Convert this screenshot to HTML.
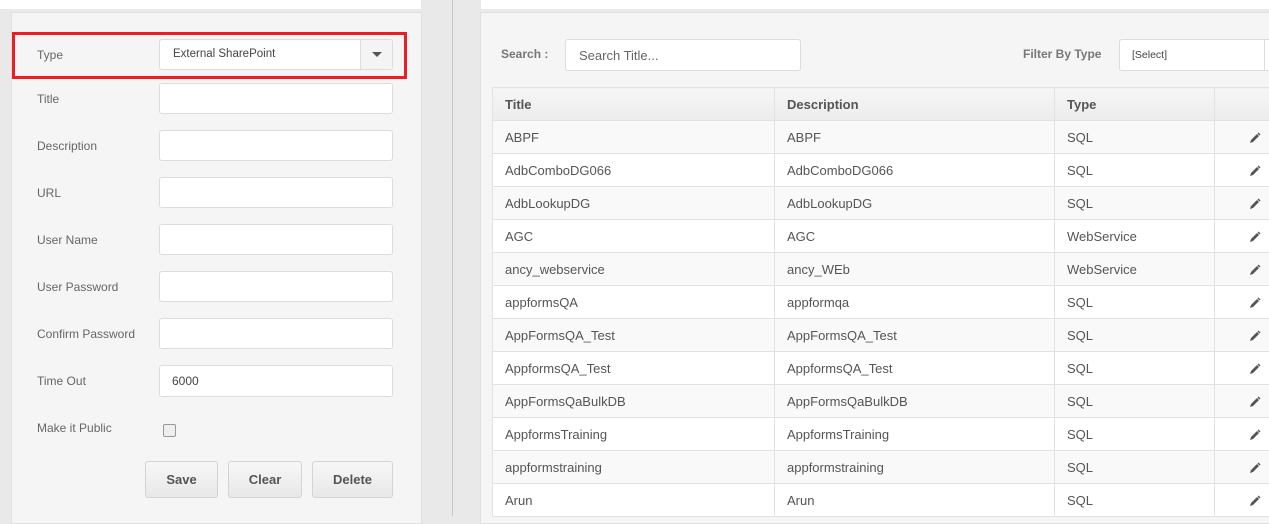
<!DOCTYPE html>
<html><head><style>
body{margin:0;width:1269px;height:516px;overflow:hidden;background:#e9e9e9;font-family:"Liberation Sans",sans-serif;position:relative}
.panel{position:absolute;background:#f5f5f5;border:1px solid #e0e0e0}
.lbl{position:absolute;left:37px;font-size:12px;color:#666}
.inp{position:absolute;left:159px;width:234px;height:31px;background:#fff;border:1px solid #dcdcdc;border-radius:3px;box-sizing:border-box;font-size:12px;color:#444;padding:8px 12px}
.btn{position:absolute;top:461px;height:37px;background:linear-gradient(#f7f7f7,#e8e8e8);border:1px solid #d4d4d4;border-radius:3px;box-sizing:border-box;font-size:13px;font-weight:bold;color:#555;text-align:center;line-height:35px}
table{position:absolute;left:492px;top:87px;border-collapse:collapse;font-size:13px;color:#555;table-layout:fixed;width:800px}
td,th{border:1px solid #e2e2e2;height:32px;padding:0 12px;text-align:left}
th{background:linear-gradient(#f6f6f6,#ececec);font-weight:bold;color:#555}
tr td{background:#fff}
tr:nth-child(even) td{background:#f9f9f9}
td.p{padding-left:34px}
svg{vertical-align:middle}
</style></head><body>
<div style="position:absolute;left:0;top:0;width:421px;height:9px;background:#fff"></div>
<div style="position:absolute;left:481px;top:0;width:788px;height:9px;background:#fff"></div>
<div style="position:absolute;left:452px;top:0;width:1px;height:516px;background:#c8c8c8"></div>
<div class="panel" style="left:11px;top:12px;width:409px;height:510px"></div>
<div class="panel" style="left:480px;top:12px;width:800px;height:510px"></div>
<div style="position:absolute;left:12px;top:32px;width:395px;height:47px;border:3px solid #ee1c25;box-sizing:border-box"></div>
<div class="lbl" style="top:48px">Type</div>
<div class="inp" style="top:39px;height:31px;padding:8px 13px;font-size:11.5px;color:#444">External SharePoint<div style="position:absolute;right:0;top:0;width:31px;height:29px;border-left:1px solid #ddd;background:#f4f4f4"><div style="position:absolute;left:11px;top:12px;border-left:5px solid transparent;border-right:5px solid transparent;border-top:5px solid #555"></div></div></div>
<div class="lbl" style="top:92px">Title</div><div class="inp" style="top:83px"></div>
<div class="lbl" style="top:139px">Description</div><div class="inp" style="top:130px"></div>
<div class="lbl" style="top:186px">URL</div><div class="inp" style="top:177px"></div>
<div class="lbl" style="top:233px">User Name</div><div class="inp" style="top:224px"></div>
<div class="lbl" style="top:280px">User Password</div><div class="inp" style="top:271px"></div>
<div class="lbl" style="top:327px">Confirm Password</div><div class="inp" style="top:318px"></div>
<div class="lbl" style="top:374px">Time Out</div><div class="inp" style="top:365px;height:32px">6000</div>
<div class="lbl" style="top:421px">Make it Public</div>
<div style="position:absolute;left:163px;top:424px;width:11px;height:11px;border:1px solid #999;border-radius:2px;background:#eee"></div>
<div class="btn" style="left:145px;width:73px">Save</div>
<div class="btn" style="left:228px;width:74px">Clear</div>
<div class="btn" style="left:312px;width:81px">Delete</div>
<div style="position:absolute;left:501px;top:47px;font-size:12px;font-weight:bold;color:#777">Search :</div>
<div class="inp" style="left:565px;top:39px;width:236px;height:32px;font-size:13px;color:#666;padding:8px 13px">Search Title...</div>
<div style="position:absolute;left:1023px;top:47px;font-size:12px;font-weight:bold;color:#777">Filter By Type</div>
<div class="inp" style="left:1119px;top:39px;width:160px;height:32px;font-size:10.5px;color:#444;padding:9px 12px">[Select]<div style="position:absolute;left:144px;top:0;width:1px;height:30px;background:#ddd"></div></div>
<table>
<colgroup><col style="width:282px"><col style="width:280px"><col style="width:160px"><col style="width:78px"></colgroup>
<tr><th>Title</th><th>Description</th><th>Type</th><th></th></tr>
<tr><td>ABPF</td><td>ABPF</td><td>SQL</td><td class="p"><svg width="12" height="12" viewBox="0 0 12 12"><path d="M1 11l1-3 6-6 2 2-6 6z" fill="#555"/><path d="M8.5 1.5l1-1 2 2-1 1z" fill="#555"/></svg></td></tr>
<tr><td>AdbComboDG066</td><td>AdbComboDG066</td><td>SQL</td><td class="p"><svg width="12" height="12" viewBox="0 0 12 12"><path d="M1 11l1-3 6-6 2 2-6 6z" fill="#555"/><path d="M8.5 1.5l1-1 2 2-1 1z" fill="#555"/></svg></td></tr>
<tr><td>AdbLookupDG</td><td>AdbLookupDG</td><td>SQL</td><td class="p"><svg width="12" height="12" viewBox="0 0 12 12"><path d="M1 11l1-3 6-6 2 2-6 6z" fill="#555"/><path d="M8.5 1.5l1-1 2 2-1 1z" fill="#555"/></svg></td></tr>
<tr><td>AGC</td><td>AGC</td><td>WebService</td><td class="p"><svg width="12" height="12" viewBox="0 0 12 12"><path d="M1 11l1-3 6-6 2 2-6 6z" fill="#555"/><path d="M8.5 1.5l1-1 2 2-1 1z" fill="#555"/></svg></td></tr>
<tr><td>ancy_webservice</td><td>ancy_WEb</td><td>WebService</td><td class="p"><svg width="12" height="12" viewBox="0 0 12 12"><path d="M1 11l1-3 6-6 2 2-6 6z" fill="#555"/><path d="M8.5 1.5l1-1 2 2-1 1z" fill="#555"/></svg></td></tr>
<tr><td>appformsQA</td><td>appformqa</td><td>SQL</td><td class="p"><svg width="12" height="12" viewBox="0 0 12 12"><path d="M1 11l1-3 6-6 2 2-6 6z" fill="#555"/><path d="M8.5 1.5l1-1 2 2-1 1z" fill="#555"/></svg></td></tr>
<tr><td>AppFormsQA_Test</td><td>AppFormsQA_Test</td><td>SQL</td><td class="p"><svg width="12" height="12" viewBox="0 0 12 12"><path d="M1 11l1-3 6-6 2 2-6 6z" fill="#555"/><path d="M8.5 1.5l1-1 2 2-1 1z" fill="#555"/></svg></td></tr>
<tr><td>AppformsQA_Test</td><td>AppformsQA_Test</td><td>SQL</td><td class="p"><svg width="12" height="12" viewBox="0 0 12 12"><path d="M1 11l1-3 6-6 2 2-6 6z" fill="#555"/><path d="M8.5 1.5l1-1 2 2-1 1z" fill="#555"/></svg></td></tr>
<tr><td>AppFormsQaBulkDB</td><td>AppFormsQaBulkDB</td><td>SQL</td><td class="p"><svg width="12" height="12" viewBox="0 0 12 12"><path d="M1 11l1-3 6-6 2 2-6 6z" fill="#555"/><path d="M8.5 1.5l1-1 2 2-1 1z" fill="#555"/></svg></td></tr>
<tr><td>AppformsTraining</td><td>AppformsTraining</td><td>SQL</td><td class="p"><svg width="12" height="12" viewBox="0 0 12 12"><path d="M1 11l1-3 6-6 2 2-6 6z" fill="#555"/><path d="M8.5 1.5l1-1 2 2-1 1z" fill="#555"/></svg></td></tr>
<tr><td>appformstraining</td><td>appformstraining</td><td>SQL</td><td class="p"><svg width="12" height="12" viewBox="0 0 12 12"><path d="M1 11l1-3 6-6 2 2-6 6z" fill="#555"/><path d="M8.5 1.5l1-1 2 2-1 1z" fill="#555"/></svg></td></tr>
<tr><td>Arun</td><td>Arun</td><td>SQL</td><td class="p"><svg width="12" height="12" viewBox="0 0 12 12"><path d="M1 11l1-3 6-6 2 2-6 6z" fill="#555"/><path d="M8.5 1.5l1-1 2 2-1 1z" fill="#555"/></svg></td></tr>
</table>
</body></html>
